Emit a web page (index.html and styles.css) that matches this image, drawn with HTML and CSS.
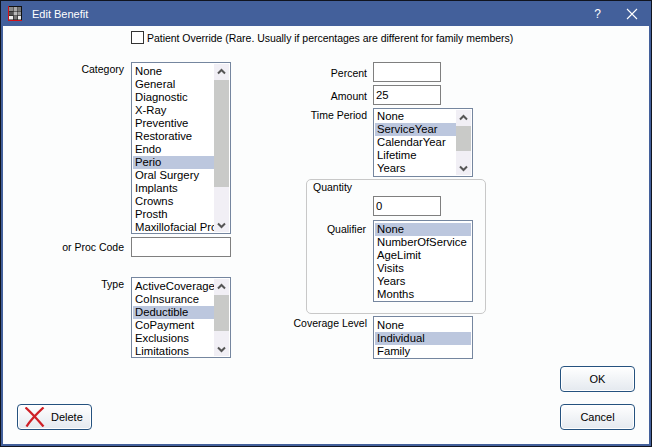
FILE: index.html
```html
<!DOCTYPE html>
<html lang="en">
<head>
    <meta charset="UTF-8">
    <title>Edit Benefit</title>
    <link rel="stylesheet" href="styles.css">
</head>
<body>
    <div class="window">
        <div class="titlebar">
            <svg class="app-icon" width="14" height="15" viewBox="0 0 14 15">
                <rect x="0" y="0" width="14" height="15" fill="#d01018"/>
                <rect x="1" y="0" width="13" height="14" fill="#111"/>
                <rect x="1" y="1" width="4" height="4" fill="#8a8a8a"/>
                <rect x="5.5" y="1" width="4" height="4" fill="#aaa"/>
                <rect x="10" y="1" width="3" height="4" fill="#777"/>
                <rect x="1" y="5.5" width="4" height="4" fill="#555"/>
                <rect x="5.5" y="5.5" width="4" height="4" fill="#bbb"/>
                <rect x="10" y="5.5" width="3" height="4" fill="#999"/>
                <rect x="1" y="10" width="4" height="3.5" fill="#eee"/>
                <rect x="5.5" y="10" width="4" height="3.5" fill="#777"/>
                <rect x="10" y="10" width="3" height="3.5" fill="#eee"/>
            </svg>
            <span class="title">Edit Benefit</span>
            <span class="help">?</span>
            <svg class="close" width="12" height="12" viewBox="0 0 12 12">
                <path d="M1 1L11 11M11 1L1 11" stroke="#fff" stroke-width="1.1" fill="none"/>
            </svg>
        </div>
        <div class="content">
            <div class="override">
                <span class="checkbox"></span>
                <span class="override-text">Patient Override (Rare. Usually if percentages are different for family members)</span>
            </div>
            <div class="columns">
                <div class="col-left">
                    <div class="field">
                        <label>Category</label>
                        <div class="list h-category">
                            <div class="items first-gap">
                                <div>None</div>
                                <div>General</div>
                                <div>Diagnostic</div>
                                <div>X-Ray</div>
                                <div>Preventive</div>
                                <div>Restorative</div>
                                <div>Endo</div>
                                <div class="selected">Perio</div>
                                <div>Oral Surgery</div>
                                <div>Implants</div>
                                <div>Crowns</div>
                                <div>Prosth</div>
                                <div>Maxillofacial Prosth</div>
                            </div>
                            <div class="scrollbar">
                                <svg class="arrow" width="15" height="16" viewBox="0 0 15 16"><path d="M4 9.5L7.5 6L11 9.5" stroke="#555" stroke-width="2" fill="none"/></svg>
                                <div class="thumb thumb-category"></div>
                                <div class="track"></div>
                                <svg class="arrow" width="15" height="16" viewBox="0 0 15 16"><path d="M4 7.5L7.5 11L11 7.5" stroke="#555" stroke-width="2" fill="none"/></svg>
                            </div>
                        </div>
                    </div>
                    <div class="field proc-code">
                        <label>or Proc Code</label>
                        <input class="text wide" type="text">
                    </div>
                    <div class="field type">
                        <label>Type</label>
                        <div class="list h-type">
                            <div class="items first-gap">
                                <div>ActiveCoverage</div>
                                <div>CoInsurance</div>
                                <div class="selected">Deductible</div>
                                <div>CoPayment</div>
                                <div>Exclusions</div>
                                <div>Limitations</div>
                            </div>
                            <div class="scrollbar">
                                <svg class="arrow" width="15" height="16" viewBox="0 0 15 16"><path d="M4 9.5L7.5 6L11 9.5" stroke="#555" stroke-width="2" fill="none"/></svg>
                                <div class="thumb thumb-type"></div>
                                <div class="track"></div>
                                <svg class="arrow" width="15" height="16" viewBox="0 0 15 16"><path d="M4 7.5L7.5 11L11 7.5" stroke="#555" stroke-width="2" fill="none"/></svg>
                            </div>
                        </div>
                    </div>
                </div>
                <div class="col-right">
                    <div class="field">
                        <label class="mid">Percent</label>
                        <input class="text" type="text">
                    </div>
                    <div class="field gap3">
                        <label class="mid">Amount</label>
                        <input class="text" type="text" value="25">
                    </div>
                    <div class="field gap3">
                        <label>Time Period</label>
                        <div class="list h-period">
                            <div class="items">
                                <div>None</div>
                                <div class="selected">ServiceYear</div>
                                <div>CalendarYear</div>
                                <div>Lifetime</div>
                                <div>Years</div>
                            </div>
                            <div class="scrollbar">
                                <svg class="arrow" width="15" height="16" viewBox="0 0 15 16"><path d="M4 9.5L7.5 6L11 9.5" stroke="#555" stroke-width="2" fill="none"/></svg>
                                <div class="thumb thumb-period"></div>
                                <div class="track"></div>
                                <svg class="arrow" width="15" height="16" viewBox="0 0 15 16"><path d="M4 7.5L7.5 11L11 7.5" stroke="#555" stroke-width="2" fill="none"/></svg>
                            </div>
                        </div>
                    </div>
                    <div class="group">
                        <div class="group-title">Quantity</div>
                        <div class="field">
                            <label></label>
                            <input class="text" type="text" value="0">
                        </div>
                        <div class="field gap4">
                            <label class="qualifier">Qualifier</label>
                            <div class="list h-qualifier">
                                <div class="items first-gap">
                                    <div class="selected">None</div>
                                    <div>NumberOfService</div>
                                    <div>AgeLimit</div>
                                    <div>Visits</div>
                                    <div>Years</div>
                                    <div>Months</div>
                                </div>
                            </div>
                        </div>
                    </div>
                    <div class="field coverage">
                        <label>Coverage Level</label>
                        <div class="list h-coverage">
                            <div class="items first-gap">
                                <div>None</div>
                                <div class="selected">Individual</div>
                                <div>Family</div>
                            </div>
                        </div>
                    </div>
                </div>
            </div>
            <div class="footer">
                <button class="btn delete">
                    <svg width="20" height="20" viewBox="0 0 20 20">
                        <path d="M0.5 0.5C6 5.5 12 12 18.5 19.5M18.5 0.5C12 6.5 6 12.5 1.5 19.5" stroke="#cf2027" stroke-width="2.3" fill="none"/>
                    </svg>
                    <span>Delete</span>
                </button>
                <div class="actions">
                    <button class="btn">OK</button>
                    <button class="btn">Cancel</button>
                </div>
            </div>
        </div>
    </div>
</body>
</html>
```

FILE: styles.css
```css
* {
    box-sizing: border-box;
}
html, body {
    margin: 0;
    padding: 0;
}
body {
    width: 652px;
    height: 447px;
    overflow: hidden;
    background-color: #43609b;
    font-family: "Liberation Sans", Arial, sans-serif;
    font-size: 10.5px;
    color: #000;
}
.window {
    width: 652px;
    height: 447px;
    display: flex;
    flex-direction: column;
    border: 1px solid #10141f;
    background-color: #43609b;
}
.titlebar {
    height: 25px;
    flex: none;
    display: flex;
    align-items: center;
    padding: 0 13px 0 7px;
    color: #fff;
    font-size: 11px;
}
.app-icon {
    margin-right: 10px;
}
.title {
    flex: 1;
}
.help {
    margin-right: 25px;
    font-size: 12px;
}
.content {
    flex: 1;
    display: flex;
    flex-direction: column;
    margin: 0 2px 2px;
    background-color: #fcfdfd;
}
.override {
    height: 36px;
    display: flex;
    align-items: flex-start;
    padding: 5px 0 0 128px;
    line-height: 13px;
    gap: 3px;
}
.override-text {
    margin-top: 1px;
    letter-spacing: -0.03px;
}
.checkbox {
    width: 13px;
    height: 13px;
    border: 1px solid #333;
    background-color: #fff;
}
.columns {
    display: flex;
    height: 304px;
}
.col-left {
    width: 280px;
    display: flex;
    flex-direction: column;
}
.col-right {
    width: 210px;
    display: flex;
    flex-direction: column;
}
.field {
    display: flex;
    gap: 6px;
}
.field label {
    width: 121px;
    flex: none;
    margin-right: 1px;
    text-align: right;
    white-space: nowrap;
    line-height: 13px;
    padding-top: 1px;
}
.col-right > .field label {
    width: 84px;
    margin-right: 0;
}
.field label.mid {
    padding-top: 5px;
}
.field label.qualifier {
    padding-top: 3px;
}
.proc-code {
    margin-top: 3px;
    align-items: center;
}
.proc-code label {
    padding-top: 0;
}
.type {
    margin-top: 20px;
}
.gap3 {
    margin-top: 3px;
}
.gap4 {
    margin-top: 4px;
}
.text {
    width: 68px;
    height: 20px;
    border: 1px solid #7f7f7f;
    padding: 0 2px;
    font: inherit;
    font-size: 11.3px;
    background-color: #fff;
    outline: none;
}
.text.wide {
    width: 100px;
}
.list {
    width: 100px;
    display: flex;
    border: 1px solid #75869f;
    padding: 1px;
    background-color: #fff;
    overflow: hidden;
}
.h-category {
    height: 172px;
}
.h-type {
    height: 81px;
}
.h-period {
    height: 69px;
}
.h-qualifier {
    height: 82px;
}
.h-coverage {
    height: 43px;
}
.items {
    flex: 1;
    min-width: 0;
    overflow: hidden;
    white-space: nowrap;
    font-size: 11.3px;
}
.first-gap {
    padding-top: 1px;
}
.items div {
    height: 13px;
    line-height: 13px;
    padding-left: 2px;
}
.items .selected {
    background-color: #bcc7de;
}
.scrollbar {
    width: 15px;
    flex: none;
    display: flex;
    flex-direction: column;
    background-color: #f1eff5;
}
.arrow {
    flex: none;
}
.thumb {
    flex: none;
    background-color: #c9cac8;
}
.thumb-category {
    height: 107px;
}
.thumb-type {
    height: 36px;
}
.thumb-period {
    height: 25px;
}
.track {
    flex: 1;
}
.group {
    width: 180px;
    height: 135px;
    margin: 2px 0 0 23px;
    border: 1px solid #c8c8c8;
    border-radius: 5px;
}
.group-title {
    height: 16px;
    padding: 1px 0 0 6px;
    line-height: 13px;
}
.group .field label {
    width: 59px;
}
.coverage {
    margin-top: 2px;
}
.footer {
    flex: 1;
    display: flex;
    justify-content: space-between;
    align-items: flex-end;
    padding: 0 14px 14px;
}
.actions {
    display: flex;
    flex-direction: column;
    gap: 12px;
}
.btn {
    width: 75px;
    height: 26px;
    border: 1px solid #25527f;
    border-radius: 4px;
    padding: 0;
    font: inherit;
    font-size: 11px;
    color: #000;
    background: linear-gradient(#ffffff, #e4e9ef);
    box-shadow: inset 0 0 0 1px #fff;
}
.delete {
    display: flex;
    align-items: center;
    padding-left: 7px;
    padding-bottom: 1px;
    gap: 6px;
}
```
